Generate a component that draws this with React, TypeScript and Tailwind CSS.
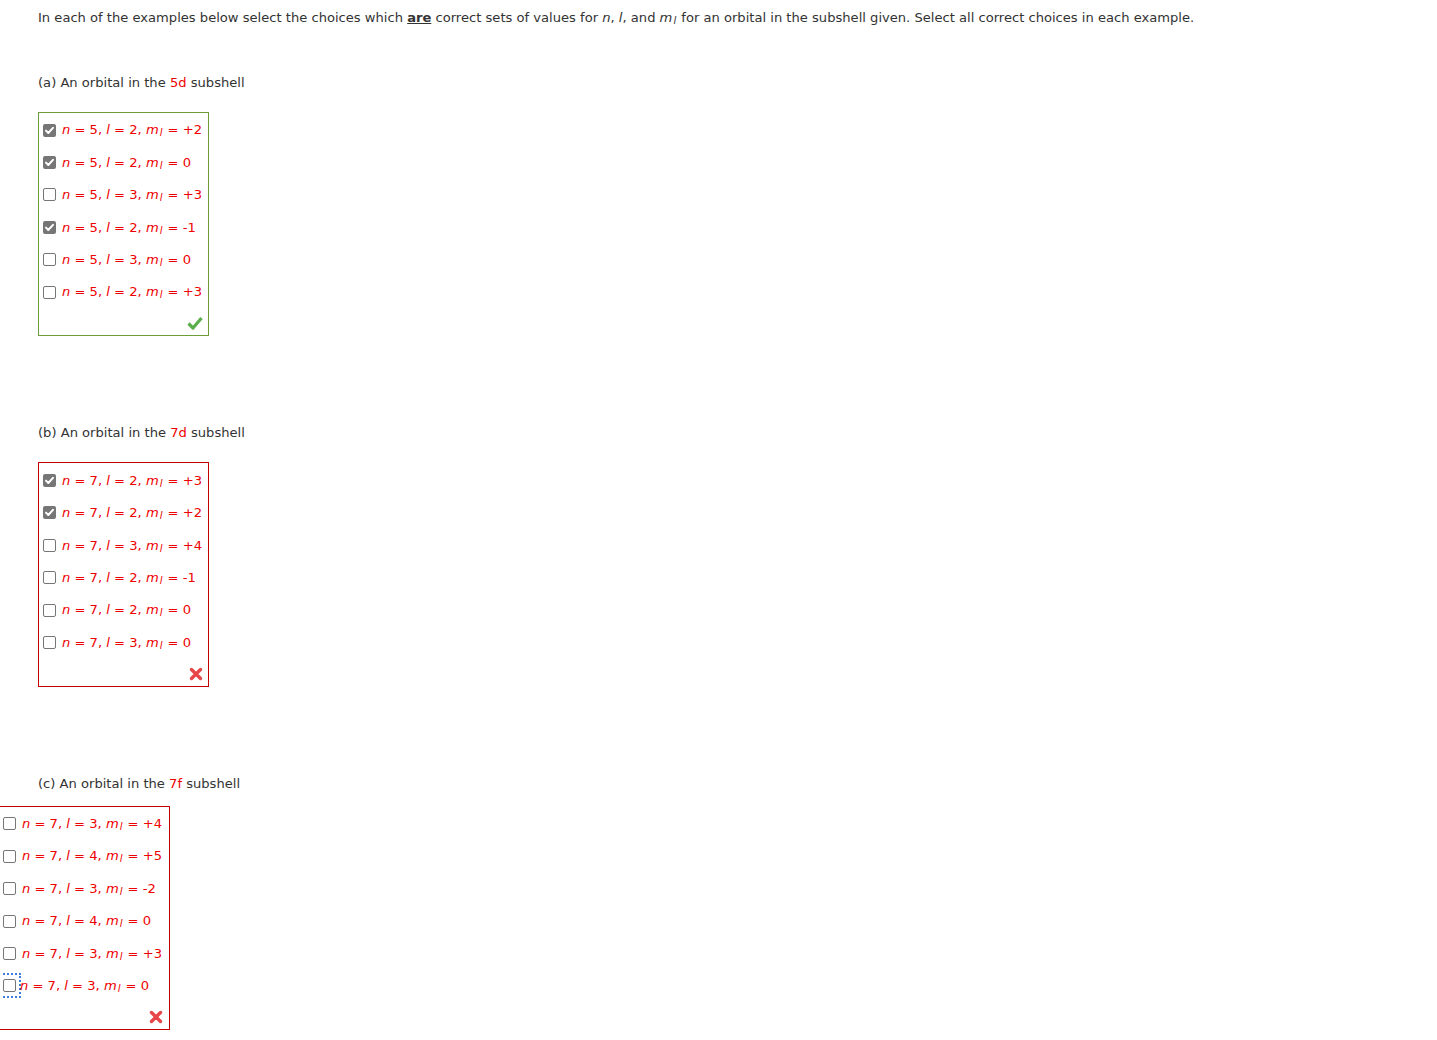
import React from "react";

type Choice = { n: number; l: number; m: string; checked?: boolean; focused?: boolean };

interface Part {
  tag: string;
  shell: string;
  status: "correct" | "wrong";
  shifted?: boolean;
  choices: Choice[];
}

const parts: Part[] = [
  {
    tag: "(a)",
    shell: "5d",
    status: "correct",
    choices: [
      { n: 5, l: 2, m: "+2", checked: true },
      { n: 5, l: 2, m: "0", checked: true },
      { n: 5, l: 3, m: "+3" },
      { n: 5, l: 2, m: "-1", checked: true },
      { n: 5, l: 3, m: "0" },
      { n: 5, l: 2, m: "+3" },
    ],
  },
  {
    tag: "(b)",
    shell: "7d",
    status: "wrong",
    choices: [
      { n: 7, l: 2, m: "+3", checked: true },
      { n: 7, l: 2, m: "+2", checked: true },
      { n: 7, l: 3, m: "+4" },
      { n: 7, l: 2, m: "-1" },
      { n: 7, l: 2, m: "0" },
      { n: 7, l: 3, m: "0" },
    ],
  },
  {
    tag: "(c)",
    shell: "7f",
    status: "wrong",
    shifted: true,
    choices: [
      { n: 7, l: 3, m: "+4" },
      { n: 7, l: 4, m: "+5" },
      { n: 7, l: 3, m: "-2" },
      { n: 7, l: 4, m: "0" },
      { n: 7, l: 3, m: "+3" },
      { n: 7, l: 3, m: "0", focused: true },
    ],
  },
];

function Box({ checked }: { checked?: boolean }) {
  if (checked) {
    return (
      <span className="flex h-[13px] w-[13px] shrink-0 items-center justify-center rounded-[2px] bg-[#767676]">
        <svg width="11" height="11" viewBox="0 0 11 11">
          <path d="M2 5.6 L4.3 8 L9 2.8" fill="none" stroke="#fff" strokeWidth="2" strokeLinecap="round" strokeLinejoin="round" />
        </svg>
      </span>
    );
  }
  return <span className="block h-[13px] w-[13px] shrink-0 rounded-[2px] border border-[#767676] bg-white" />;
}

function Sub() {
  return <sub className="relative top-[2px] ml-[1px] mr-[1px] text-[10px] italic">l</sub>;
}

function Row({ c }: { c: Choice }) {
  return (
    <div className="flex h-[32.4px] items-center">
      <span
        className={
          c.focused
            ? "flex items-center px-[3px] py-[4px] outline-2 outline-dotted outline-[#3b7ddd] -ml-[3px] mr-[1px]"
            : "flex items-center mr-[6px]"
        }
      >
        <Box checked={c.checked} />
      </span>
      <span className="whitespace-pre text-[#ee0000]">
        <i>n</i> = {c.n}, <i>l</i> = {c.l}, <i>m</i>
        <Sub /> = {c.m}
      </span>
    </div>
  );
}

function Mark({ status }: { status: Part["status"] }) {
  if (status === "correct") {
    return (
      <svg width="16" height="14" viewBox="0 0 16 14">
        <path d="M1.5 7.5 L6 12 L14.5 2" fill="none" stroke="#5cae4c" strokeWidth="3.2" strokeLinejoin="round" />
      </svg>
    );
  }
  return (
    <svg width="14" height="14" viewBox="0 0 14 14">
      <path d="M2.5 2.5 L11.5 11.5 M11.5 2.5 L2.5 11.5" stroke="#e8474a" strokeWidth="3.4" strokeLinecap="round" />
    </svg>
  );
}

function Section({ part }: { part: Part }) {
  const border = part.status === "correct" ? "border-[#6b9e35]" : "border-[#c40000]";
  return (
    <section>
      <p className="h-[17px] leading-[17px]">
        {part.tag} An orbital in the <span className="text-[#ee0000]">{part.shell}</span> subshell
      </p>
      <div
        className={
          "border pt-px pb-[5px] " +
          border +
          (part.shifted ? " mt-[14px] -ml-[39px] w-[171px] pl-[3px] pr-[6px]" : " mt-[21px] w-[171px] pl-[4px] pr-[5px]")
        }
      >
        {part.choices.map((c, i) => (
          <Row key={i} c={c} />
        ))}
        <div className="flex h-[22px] items-end justify-end">
          <Mark status={part.status} />
        </div>
      </div>
    </section>
  );
}

export default function App() {
  return (
    <div className="min-h-[1040px] bg-white pl-[38px] pt-[9px] text-[13.1px] text-[#333] [font-family:'DejaVu_Sans',Verdana,sans-serif]">
      <p className="h-[17px] leading-[17px]">
        In each of the examples below select the choices which <b className="underline">are</b> correct sets of values
        for <i>n</i>, <i>l</i>, and <i>m</i>
        <Sub /> for an orbital in the subshell given. Select all correct choices in each example.
      </p>
      <div className="mt-[48px] flex flex-col gap-[88px]">
        {parts.map((p) => (
          <Section key={p.tag} part={p} />
        ))}
      </div>
    </div>
  );
}
